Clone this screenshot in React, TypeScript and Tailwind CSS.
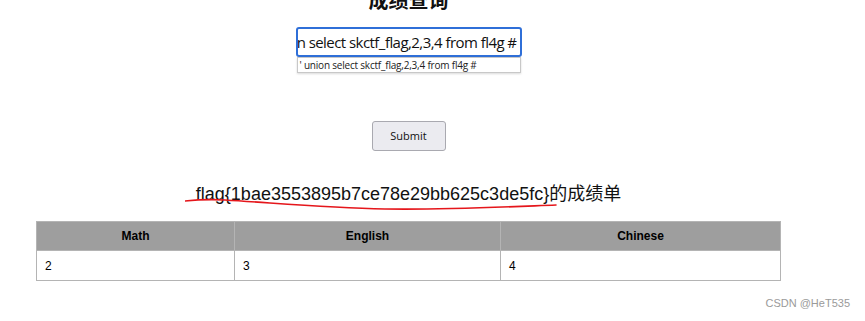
import React from 'react'

const query = "' union select skctf_flag,2,3,4 from fl4g #"

export default function App() {
  return (
    <div className="relative h-[321px] w-[865px] overflow-hidden bg-white font-['Liberation_Sans','Noto_Sans_CJK_SC',sans-serif] text-black">
      <div className="flex w-[817px] flex-col items-center">
        {/* Title, scrolled partly out of view */}
        <h2 className="-mt-[12px] h-[24px] font-['Noto_Sans_CJK_SC',sans-serif] text-[20px] font-bold leading-[24px] text-[#111]">
          成绩查询
        </h2>

        {/* Search input with autocomplete */}
        <div className="relative mt-[15px]">
          <div className="flex h-[30px] w-[226px] items-center justify-end overflow-hidden rounded-[3px] border-2 border-[#2f6fd8] bg-white pr-[3px] font-['Open_Sans','Noto_Sans',sans-serif] text-[15px] tracking-[-0.55px] whitespace-nowrap text-[#111]">
            {query}
          </div>
          <div className="absolute top-[30px] left-[1px] flex h-[16px] w-[224px] items-center border border-[#c8c8c8] bg-white pl-[2px] font-['Open_Sans','Noto_Sans',sans-serif] text-[10px] tracking-[-0.2px] whitespace-nowrap text-[#222] shadow-[0_1px_2px_rgba(0,0,0,0.15)]">
            {query}
          </div>
        </div>

        <button className="mt-[64px] h-[30px] w-[74px] rounded-[3px] border border-[#a9a9b0] bg-[#ebebf0] font-['Open_Sans','Noto_Sans',sans-serif] text-[11px] text-[#111]">
          Submit
        </button>

        <div className="relative mt-[32px]">
          <p className="text-[18px] leading-[22px] text-[#111]">
            flag{'{'}1bae3553895b7ce78e29bb625c3de5fc{'}'}的成绩单
          </p>
          <svg className="absolute top-[13px] -left-[11px] h-[20px] w-[380px]" viewBox="0 0 380 20" fill="none">
            <path
              d="M0 5 C 10 4, 20 3, 40 4 C 90 7, 140 12, 200 13 C 260 14, 320 11, 371 9"
              stroke="#e5161b"
              strokeWidth="1.6"
              strokeLinecap="round"
            />
          </svg>
        </div>

        <table className="mt-[16px] w-[745px] border-collapse text-[12px]">
          <thead>
            <tr className="h-[29px] bg-[#9e9e9e]">
              <th className="w-[198px] border border-[#b4b4b4] font-bold">Math</th>
              <th className="w-[266px] border border-[#b4b4b4] font-bold">English</th>
              <th className="border border-[#b4b4b4] font-bold">Chinese</th>
            </tr>
          </thead>
          <tbody>
            <tr className="h-[30px]">
              <td className="border border-[#b4b4b4] pl-[8px]">2</td>
              <td className="border border-[#b4b4b4] pl-[8px]">3</td>
              <td className="border border-[#b4b4b4] pl-[8px]">4</td>
            </tr>
          </tbody>
        </table>
      </div>

      <div className="absolute right-[15px] bottom-[10px] text-[11px] text-[#9a9a9a]">CSDN @HeT535</div>
    </div>
  )
}
